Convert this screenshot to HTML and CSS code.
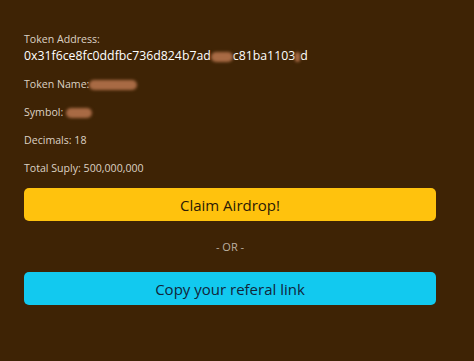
FILE: index.html
```html
<!DOCTYPE html>
<html lang="en">
<head>
  <meta charset="UTF-8" />
  <title>Airdrop</title>
  <link rel="stylesheet" href="styles.css">
</head>
<body>
  <div class="card">
    <div class="info">
      <div class="row">
        <p class="label">Token Address:</p>
        <p class="address">0x31f6ce8fc0ddfbc736d824b7ad<span class="smudge wide"></span>c81ba1103<span class="smudge narrow"></span>d</p>
      </div>
      <p class="label">Token Name:<span class="smudge name"></span></p>
      <p class="label">Symbol: <span class="smudge sym"></span></p>
      <p class="label">Decimals: 18</p>
      <p class="label">Total Suply: 500,000,000</p>
    </div>
    <button class="btn claim">Claim Airdrop!</button>
    <div class="or">- OR -</div>
    <button class="btn copy">Copy your referal link</button>
  </div>
</body>
</html>
```

FILE: styles.css
```css
* { box-sizing: border-box; margin: 0; padding: 0; }
body {
  background: #3e2305;
  font-family: 'Open Sans', 'Noto Sans', sans-serif;
  color: #e9dfd3;
  height: 361px;
  overflow: hidden;
}
.card {
  padding: 32px 38px 0 24px;
  display: flex;
  flex-direction: column;
}
.info {
  display: flex;
  flex-direction: column;
  gap: 13px;
}
.label {
  font-size: 10.6px;
  line-height: 15px;
  color: #ddd2c4;
}
.address {
  font-size: 12.3px;
  line-height: 17px;
  color: #fff;
}
/* redacted bits */
.smudge {
  display: inline-block;
  background: #a86a44;
  border-radius: 5px;
  filter: blur(1.5px);
  height: 10px;
  vertical-align: middle;
}
.smudge.wide { width: 22px; }
.smudge.narrow { width: 5px; }
.smudge.name { width: 48px; }
.smudge.sym { width: 26px; }
.btn {
  width: 412px;
  height: 33px;
  border: none;
  border-radius: 5px;
  font-family: inherit;
  font-size: 15px;
  color: #2a1a06;
}
.claim {
  margin-top: 12px;
  background: #ffc20d;
}
.copy {
  background: #12c9ef;
  color: #11253a;
}
.or {
  text-align: center;
  font-size: 11px;
  color: #bdb0a2;
  height: 51px;
  line-height: 51px;
}
```
